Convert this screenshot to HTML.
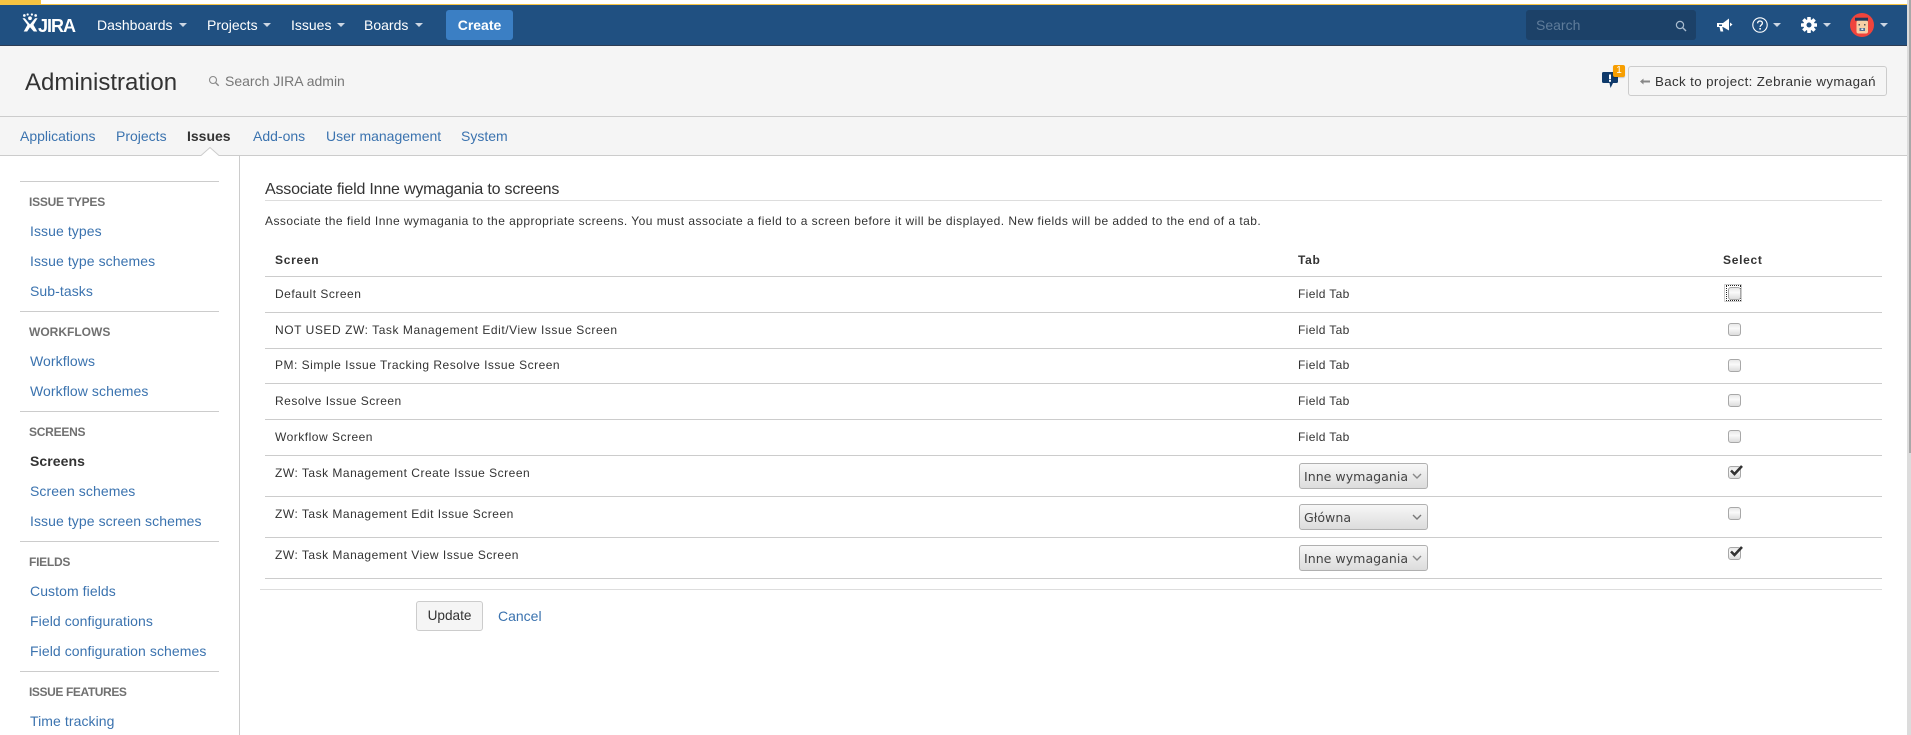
<!DOCTYPE html>
<html lang="en"><head><meta charset="utf-8"><title>Associate field to screens</title>
<style>
html,body{margin:0;padding:0;width:1911px;height:735px;overflow:hidden;background:#fff;font-family:"Liberation Sans",Arial,sans-serif;font-size:14px;color:#333}
a{color:#3b73af;text-decoration:none}
.t{position:absolute;white-space:nowrap;line-height:18px;height:18px}
.bar{position:absolute;background:#ccc;height:1px}
.nav{color:#fff;font-size:14px;top:16px}
.car{position:absolute;width:0;height:0;border-left:4px solid transparent;border-right:4px solid transparent;border-top:4px solid #ccd6e3}
.tab{top:127px;font-size:14px}
.h{left:29px;font-size:12px;font-weight:bold;color:#707070;letter-spacing:-.25px}
.l{left:30px;font-size:14px;letter-spacing:.08px}
.c{font-size:12px;letter-spacing:.5px;color:#333}
.ft{letter-spacing:.35px}
.th{font-weight:bold;font-size:12px;letter-spacing:.7px;color:#333;top:251px}
.cb{position:absolute;left:1728px;width:11px;height:11px;border:1px solid #a8a8a8;border-radius:3px;background:linear-gradient(#e8e8e8,#fafafa 40%,#dcdcdc)}
.sel{position:absolute;left:1299px;width:129px;height:26px;box-sizing:border-box;border:1px solid #b0b0b0;border-radius:3px;background:linear-gradient(#f7f7f7,#dcdcdc);font-family:"DejaVu Sans",sans-serif;font-size:12.6px;line-height:26px;color:#444;padding-left:4px;white-space:nowrap}
.sel svg{position:absolute;right:5px;top:9px}
svg{display:block}
</style></head><body>
<!-- top strip -->
<div style="position:absolute;left:0;top:0;width:41px;height:4px;background:#f6c342"></div>
<div style="position:absolute;left:0;top:4px;width:1907px;height:1px;background:#f6c342"></div>
<!-- header -->
<div style="position:absolute;left:0;top:5px;width:1907px;height:41px;background:#205081;border-bottom:1px solid #2e3d54;box-sizing:border-box"></div>

<!-- JIRA logo -->
<svg style="position:absolute;left:22px;top:13px" width="16" height="20" viewBox="0 0 17 20"><g fill="#fff"><circle cx="2.500" cy="2" r="1.400"/><circle cx="6" cy="1" r="1.200"/><circle cx="10.500" cy="1" r="1.200"/><circle cx="14.500" cy="2" r="1.400"/><circle cx="8.500" cy="5" r="2"/><path d="M0.500 5l2.500 0 5.500 6.500L14 5h2.500l-4.300 7 4 7h-3.700L8.500 14.500 5.500 19H1.800l4-7z"/></g></svg>
<div class="t" style="left:38px;top:17px;font-size:18px;font-weight:bold;color:#fff;letter-spacing:-1px">JIRA</div>

<div class="t nav" style="left:97px">Dashboards</div><i class="car" style="left:179px;top:23px"></i>
<div class="t nav" style="left:207px">Projects</div><i class="car" style="left:263px;top:23px"></i>
<div class="t nav" style="left:291px">Issues</div><i class="car" style="left:337px;top:23px"></i>
<div class="t nav" style="left:364px">Boards</div><i class="car" style="left:415px;top:23px"></i>
<div style="position:absolute;left:446px;top:10px;width:67px;height:30px;background:#3b7fc4;border-radius:3px;color:#fff;font-weight:bold;font-size:14px;line-height:30px;text-align:center">Create</div>

<!-- search -->
<div style="position:absolute;left:1526px;top:10px;width:170px;height:30px;background:#1c4168;border-radius:3px"></div>
<div class="t" style="left:1536px;top:16px;font-size:14px;color:#5f7c9a">Search</div>
<svg style="position:absolute;left:1675px;top:20px" width="12" height="12" viewBox="0 0 12 12"><circle cx="5" cy="5" r="3.600" fill="none" stroke="#a9bccf" stroke-width="1.200"/><path d="M7.800 7.800l3.200 3.200" stroke="#a9bccf" stroke-width="1.400"/></svg>
<!-- megaphone -->
<svg style="position:absolute;left:1717px;top:18px" width="16" height="15" viewBox="0 0 16 15"><path d="M0 5h6l6-4.500v12L6 9H5.300l1 4.500H3.500L2.500 9H0z" fill="#fff"/><path d="M13 4.500l2.500 2-2.500 2z" fill="#fff"/><rect x="2" y="6.500" width="3" height="1.500" fill="#205081"/></svg>
<!-- help -->
<svg style="position:absolute;left:1752px;top:17px" width="16" height="16" viewBox="0 0 16 16"><circle cx="8" cy="8" r="7.200" fill="none" stroke="#fff" stroke-width="1.100"/><path d="M5.600 6.300C5.700 4.800 6.700 4 8 4c1.400 0 2.400.9 2.400 2.100 0 1.900-2.300 1.800-2.300 3.800" fill="none" stroke="#fff" stroke-width="1.300"/><rect x="7.300" y="11" width="1.600" height="1.600" fill="#fff"/></svg>
<i class="car" style="left:1773px;top:23px"></i>
<!-- gear -->
<svg style="position:absolute;left:1801px;top:17px" width="16" height="16" viewBox="0 0 16 16"><g fill="#fff"><circle cx="8" cy="8" r="5.600"/><rect x="6.200" y="0" width="3.600" height="16" rx=".6"/><rect x="6.200" y="0" width="3.600" height="16" rx=".6" transform="rotate(45 8 8)"/><rect x="6.200" y="0" width="3.600" height="16" rx=".6" transform="rotate(90 8 8)"/><rect x="6.200" y="0" width="3.600" height="16" rx=".6" transform="rotate(135 8 8)"/></g><circle cx="8" cy="8" r="2.500" fill="#205081"/></svg>
<i class="car" style="left:1823px;top:23px"></i>
<!-- avatar -->
<svg style="position:absolute;left:1850px;top:13px" width="24" height="24" viewBox="0 0 24 24"><circle cx="12" cy="12" r="12" fill="#f0443c"/><rect x="6.500" y="7.500" width="11.500" height="13" rx="2" fill="#f7cfa6"/><rect x="5" y="4.700" width="13" height="3" fill="#20395c"/><rect x="8.500" y="11" width="1.500" height="1.500" fill="#555"/><rect x="14" y="11" width="1.500" height="1.500" fill="#555"/><rect x="9.500" y="15" width="5.500" height="3" fill="#4f6f96"/><rect x="11.300" y="15.500" width="2" height="1.400" fill="#fff"/></svg>
<i class="car" style="left:1880px;top:23px"></i>

<!-- page header -->
<div style="position:absolute;left:0;top:46px;width:1907px;height:109px;background:#f5f5f5"></div>
<div class="bar" style="left:0;top:116px;width:1907px"></div>
<div class="bar" style="left:0;top:155px;width:1907px"></div>
<div class="t" style="left:25px;top:69px;font-size:24px;line-height:28px;height:28px;color:#333">Administration</div>
<svg style="position:absolute;left:208px;top:75px" width="12" height="12" viewBox="0 0 12 12"><circle cx="5" cy="5" r="3.500" fill="none" stroke="#8a8a8a" stroke-width="1.100"/><path d="M7.700 7.700l3 3" stroke="#8a8a8a" stroke-width="1.400"/></svg>
<div class="t" style="left:225px;top:72px;font-size:14px;color:#777">Search JIRA admin</div>

<!-- notification -->
<svg style="position:absolute;left:1602px;top:72px" width="17" height="17" viewBox="0 0 17 17"><path d="M1.500 0h13A1.500 1.500 0 0 1 16 1.500v8A1.500 1.500 0 0 1 14.500 11H11l-2.500 5-1-5h-6A1.500 1.500 0 0 1 0 9.500v-8A1.500 1.500 0 0 1 1.500 0z" fill="#0f3a6b"/><rect x="7" y="2.500" width="2" height="4.800" fill="#fff"/><rect x="7" y="8" width="2" height="1.800" fill="#fff"/></svg>
<div style="position:absolute;left:1613px;top:65px;width:12px;height:12px;background:#f79e00;border-radius:2px;color:#fff;font-size:10px;line-height:12px;text-align:center;box-shadow:0 1px 1px rgba(0,0,0,.2)">1</div>
<div style="position:absolute;left:1628px;top:66px;width:259px;height:30px;box-sizing:border-box;border:1px solid #ccc;border-radius:3px;background:#f5f5f5"></div>
<svg style="position:absolute;left:1640px;top:78px" width="10" height="7" viewBox="0 0 10 7"><path d="M0 3.500L3.500.5V2.500H10v2H3.500v2z" fill="#888"/></svg>
<div class="t" style="left:1655px;top:73px;font-size:13.3px;color:#333;letter-spacing:.38px">Back to project: Zebranie wymagań</div>

<!-- tabs -->
<a class="t tab" style="left:20px" href="#">Applications</a>
<a class="t tab" style="left:116px" href="#">Projects</a>
<a class="t tab" style="left:187px;font-weight:bold;color:#333" href="#">Issues</a>
<a class="t tab" style="left:253px" href="#">Add-ons</a>
<a class="t tab" style="left:326px" href="#">User management</a>
<a class="t tab" style="left:461px" href="#">System</a>
<svg style="position:absolute;left:201px;top:147px" width="18" height="9" viewBox="0 0 18 9"><path d="M0 9L9 .5 18 9z" fill="#fff"/><path d="M0 8.500L9 .5l9 8" fill="none" stroke="#ccc"/></svg>

<!-- sidebar -->
<div style="position:absolute;left:239px;top:156px;width:1px;height:579px;background:#ccc"></div>
<div class="bar" style="left:20px;top:181px;width:199px"></div>
<div class="t h" style="top:193px">ISSUE TYPES</div>
<a class="t l" style="top:222px" href="#">Issue types</a>
<a class="t l" style="top:252px" href="#">Issue type schemes</a>
<a class="t l" style="top:282px" href="#">Sub-tasks</a>
<div class="bar" style="left:20px;top:311px;width:199px"></div>
<div class="t h" style="top:323px;letter-spacing:0">WORKFLOWS</div>
<a class="t l" style="top:352px" href="#">Workflows</a>
<a class="t l" style="top:382px" href="#">Workflow schemes</a>
<div class="bar" style="left:20px;top:411px;width:199px"></div>
<div class="t h" style="top:423px">SCREENS</div>
<a class="t l" style="top:452px;font-weight:bold;color:#333" href="#">Screens</a>
<a class="t l" style="top:482px" href="#">Screen schemes</a>
<a class="t l" style="top:512px" href="#">Issue type screen schemes</a>
<div class="bar" style="left:20px;top:541px;width:199px"></div>
<div class="t h" style="top:553px">FIELDS</div>
<a class="t l" style="top:582px" href="#">Custom fields</a>
<a class="t l" style="top:612px" href="#">Field configurations</a>
<a class="t l" style="top:642px" href="#">Field configuration schemes</a>
<div class="bar" style="left:20px;top:671px;width:199px"></div>
<div class="t h" style="top:683px;letter-spacing:-.4px">ISSUE FEATURES</div>
<a class="t l" style="top:712px" href="#">Time tracking</a>

<!-- main -->
<div class="t" style="left:265px;top:181px;font-size:16px;color:#333;letter-spacing:-.2px">Associate field Inne wymagania to screens</div>
<div class="bar" style="left:265px;top:200px;width:1617px;background:#ddd"></div>
<div class="t c" style="left:265px;top:212px;letter-spacing:.46px">Associate the field Inne wymagania to the appropriate screens. You must associate a field to a screen before it will be displayed. New fields will be added to the end of a tab.</div>

<div class="t th" style="left:275px">Screen</div>
<div class="t th" style="left:1298px">Tab</div>
<div class="t th" style="left:1723px">Select</div>
<div class="bar" style="left:265px;top:276px;width:1617px"></div>

<div class="t c" style="left:275px;top:285px">Default Screen</div><div class="t c ft" style="left:1298px;top:285px">Field Tab</div>
<div class="bar" style="left:265px;top:312px;width:1617px"></div>
<div class="t c" style="left:275px;top:321px;letter-spacing:.55px">NOT USED ZW: Task Management Edit/View Issue Screen</div><div class="t c ft" style="left:1298px;top:321px">Field Tab</div>
<div class="bar" style="left:265px;top:348px;width:1617px"></div>
<div class="t c" style="left:275px;top:356px">PM: Simple Issue Tracking Resolve Issue Screen</div><div class="t c ft" style="left:1298px;top:356px">Field Tab</div>
<div class="bar" style="left:265px;top:383px;width:1617px"></div>
<div class="t c" style="left:275px;top:392px">Resolve Issue Screen</div><div class="t c ft" style="left:1298px;top:392px">Field Tab</div>
<div class="bar" style="left:265px;top:419px;width:1617px"></div>
<div class="t c" style="left:275px;top:428px">Workflow Screen</div><div class="t c ft" style="left:1298px;top:428px">Field Tab</div>
<div class="bar" style="left:265px;top:455px;width:1617px"></div>
<div class="t c" style="left:275px;top:464px">ZW: Task Management Create Issue Screen</div>
<div class="bar" style="left:265px;top:496px;width:1617px"></div>
<div class="t c" style="left:275px;top:505px">ZW: Task Management Edit Issue Screen</div>
<div class="bar" style="left:265px;top:537px;width:1617px"></div>
<div class="t c" style="left:275px;top:546px">ZW: Task Management View Issue Screen</div>
<div class="bar" style="left:265px;top:578px;width:1617px"></div>
<div class="bar" style="left:260px;top:589px;width:1622px;background:#ddd"></div>

<!-- selects -->
<div class="sel" style="top:463px">Inne wymagania<svg width="10" height="7" viewBox="0 0 10 7"><path d="M1 1l4 4 4-4" fill="none" stroke="#888" stroke-width="1.400"/></svg></div>
<div class="sel" style="top:504px">Główna<svg width="10" height="7" viewBox="0 0 10 7"><path d="M1 1l4 4 4-4" fill="none" stroke="#777" stroke-width="1.400"/></svg></div>
<div class="sel" style="top:545px">Inne wymagania<svg width="10" height="7" viewBox="0 0 10 7"><path d="M1 1l4 4 4-4" fill="none" stroke="#888" stroke-width="1.400"/></svg></div>

<!-- checkboxes -->
<div style="position:absolute;left:1724px;top:284px;width:16px;height:16px;border:1px solid #ccc;border-radius:1px"></div>
<div style="position:absolute;left:1726px;top:285px;width:13px;height:14px;border:1px dotted #222"></div>
<i class="cb" style="top:287px"></i>
<i class="cb" style="top:323px"></i>
<i class="cb" style="top:359px"></i>
<i class="cb" style="top:394px"></i>
<i class="cb" style="top:430px"></i>
<i class="cb" style="top:466px"></i>
<svg style="position:absolute;left:1729px;top:464px" width="15" height="13" viewBox="0 0 15 13"><path d="M2 6.500l3.500 3.500L13 2" fill="none" stroke="#333" stroke-width="2.600"/></svg>
<i class="cb" style="top:507px"></i>
<i class="cb" style="top:547px"></i>
<svg style="position:absolute;left:1729px;top:545px" width="15" height="13" viewBox="0 0 15 13"><path d="M2 6.500l3.500 3.500L13 2" fill="none" stroke="#333" stroke-width="2.600"/></svg>

<!-- buttons -->
<div style="position:absolute;left:416px;top:601px;width:67px;height:30px;box-sizing:border-box;border:1px solid #ccc;border-radius:3px;background:#f5f5f5;color:#333;font-size:13.6px;line-height:28px;text-align:center">Update</div>
<a class="t" style="left:498px;top:607px;font-size:14px" href="#">Cancel</a>

<!-- scrollbar -->
<div style="position:absolute;left:1907px;top:0;width:4px;height:735px;background:#dcdcdc"></div>
<div style="position:absolute;left:1909px;top:0;width:2px;height:453px;background:#a8a8a8"></div>
</body></html>
